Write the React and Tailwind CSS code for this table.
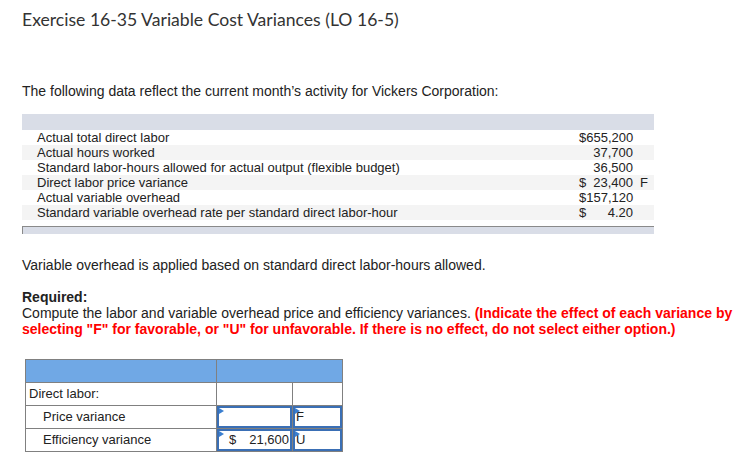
export default function App() {
  const rows = [
    { label: 'Actual total direct labor', dollar: '$655,200', value: '', fav: '' },
    { label: 'Actual hours worked', dollar: '', value: '37,700', fav: '' },
    { label: 'Standard labor-hours allowed for actual output (flexible budget)', dollar: '', value: '36,500', fav: '' },
    { label: 'Direct labor price variance', dollar: '$', value: '23,400', fav: 'F' },
    { label: 'Actual variable overhead', dollar: '', value: '$157,120', fav: '' },
    { label: 'Standard variable overhead rate per standard direct labor-hour', dollar: '$', value: '4.20', fav: '' },
  ]

  return (
    <div className="w-[756px] h-[468px] bg-white text-[#222] overflow-hidden" style={{ fontFamily: '"Liberation Sans", Arial, sans-serif' }}>
      <div className="pl-[22px] pt-[9px]">
        {/* Title */}
        <h1 className="text-[17.6px] leading-[22px] text-[#333]" style={{ fontFamily: 'Lato, "Liberation Sans", sans-serif' }}>
          Exercise 16-35 Variable Cost Variances (LO 16-5)
        </h1>

        <p className="mt-[51px] text-[14px] leading-[18px]">
          The following data reflect the current month’s activity for Vickers Corporation:
        </p>

        {/* Data table */}
        <div className="mt-[14px] w-[632px] text-[13px] leading-[15px]">
          <div className="h-[16px] bg-[#d9dde7]" />
          {rows.map((r, i) => (
            <div key={i} className={`flex h-[15px] ${i % 2 === 1 ? 'bg-[#f4f4f4]' : 'bg-white'}`}>
              <div className="pl-[15px] w-[557px] whitespace-nowrap">{r.label}</div>
              <div className="flex justify-between w-[54px]">
                <span>{r.dollar}</span>
                <span>{r.value}</span>
              </div>
              <div className="pl-[7px]">{r.fav}</div>
            </div>
          ))}
          <div className="mt-[6px] h-[8px] bg-[#d9dde7] border-t border-l border-[#8a8a8a]" />
        </div>

        <p className="mt-[22px] text-[14px] leading-[18px]">
          Variable overhead is applied based on standard direct labor-hours allowed.
        </p>

        <div className="mt-[15px] text-[14px] leading-[16px]">
          <p className="font-bold">Required:</p>
          <p>
            Compute the labor and variable overhead price and efficiency variances.{' '}
            <span className="font-bold text-[#ff0000]">
              (Indicate the effect of each variance by selecting "F" for favorable, or "U" for unfavorable. If there is no effect, do not select either option.)
            </span>
          </p>
        </div>

        {/* Answer table */}
        <table className="mt-[22px] ml-[3px] border-collapse text-[13px]">
          <tbody>
            <tr className="h-[23px] bg-[#70a8e5]">
              <td className="w-[191px] border border-[#808080]" />
              <td colSpan={2} className="border border-[#808080]" />
            </tr>
            <tr className="h-[23px]">
              <td className="border border-[#808080] pl-[3px]">Direct labor:</td>
              <td className="w-[76px] border border-[#808080]" />
              <td className="w-[50px] border border-[#808080]" />
            </tr>
            <tr className="h-[23px]">
              <td className="border border-[#808080] pl-[17px]">Price variance</td>
              <td className="border border-[#808080] p-0">
                <InputCell />
              </td>
              <td className="border border-[#808080] p-0">
                <InputCell text="F" />
              </td>
            </tr>
            <tr className="h-[23px]">
              <td className="border border-[#808080] pl-[17px]">Efficiency variance</td>
              <td className="border border-[#808080] p-0">
                <InputCell dollar value="21,600" />
              </td>
              <td className="border border-[#808080] p-0">
                <InputCell text="U" />
              </td>
            </tr>
          </tbody>
        </table>
      </div>
    </div>
  )
}

function InputCell({ dollar, value, text }) {
  return (
    <div className="relative h-[22px] border-2 border-[#3a6fb5] flex items-center">
      <div className="absolute left-0 top-0 w-0 h-0 border-t-[3px] border-b-[3px] border-l-[5px] border-t-transparent border-b-transparent border-l-[#3a7fd0]" />
      {text ? (
        <span className="pl-[1px]">{text}</span>
      ) : (
        <div className="flex justify-between w-full pl-[10px] pr-[1px]">
          <span>{dollar ? '$' : ''}</span>
          <span>{value}</span>
        </div>
      )}
    </div>
  )
}
